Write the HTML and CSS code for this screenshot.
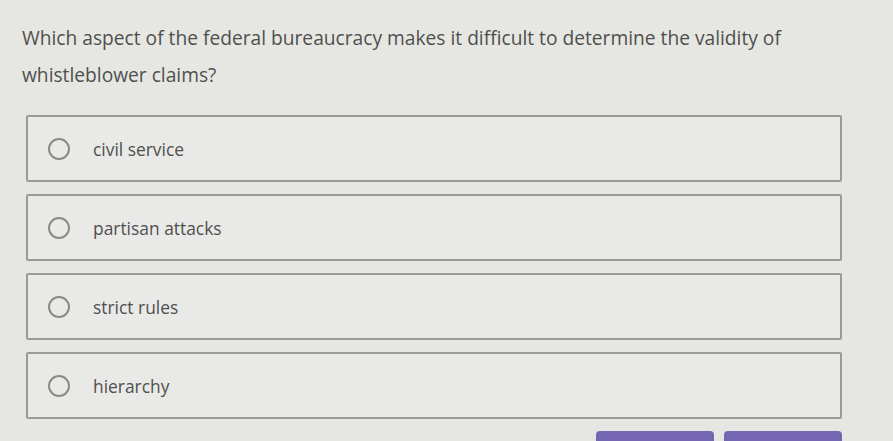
FILE: index.html
```html
<!DOCTYPE html>
<html>
<head>
<meta charset="utf-8">
<link rel="stylesheet" href="styles.css">
</head>
<body>
<div class="page">
  <p class="question">Which aspect of the federal bureaucracy makes it difficult to determine the validity of whistleblower claims?</p>
  <div class="options">
    <label class="option"><span class="radio"></span><span class="label">civil service</span></label>
    <label class="option"><span class="radio"></span><span class="label">partisan attacks</span></label>
    <label class="option"><span class="radio"></span><span class="label">strict rules</span></label>
    <label class="option"><span class="radio"></span><span class="label">hierarchy</span></label>
  </div>
  <div class="actions">
    <span class="btn"></span>
    <span class="btn"></span>
  </div>
</div>
</body>
</html>
```

FILE: styles.css
```css
html, body {
  margin: 0;
  padding: 0;
  background: #e6e7e3;
  height: 100%;
  overflow: hidden;
}
.page {
  padding: 19px 40px 0 22px;
  font-family: "Open Sans", "Noto Sans", sans-serif;
  color: #4f504e;
}
.question {
  margin: 0;
  font-size: 19.2px;
  line-height: 37px;
  max-width: 800px;
}
.options {
  margin-top: 22px;
  margin-left: 4px;
  display: flex;
  flex-direction: column;
  gap: 12px;
  width: 816px;
}
.option {
  display: flex;
  align-items: center;
  height: 63px;
  border: 2px solid #9a9b98;
  border-radius: 2px;
  background: #e9eae7;
  padding-left: 20px;
}
.radio {
  width: 18px;
  height: 18px;
  border: 2px solid #8a8b88;
  border-radius: 50%;
  flex: none;
}
.label {
  margin-left: 23px;
  font-size: 17.4px;
  color: #4f504e;
}
.actions {
  display: flex;
  justify-content: flex-end;
  gap: 10px;
  width: 820px;
  margin-top: 12px;
}
.btn {
  width: 118px;
  height: 30px;
  background: #7566b3;
  border-radius: 4px;
}
```
